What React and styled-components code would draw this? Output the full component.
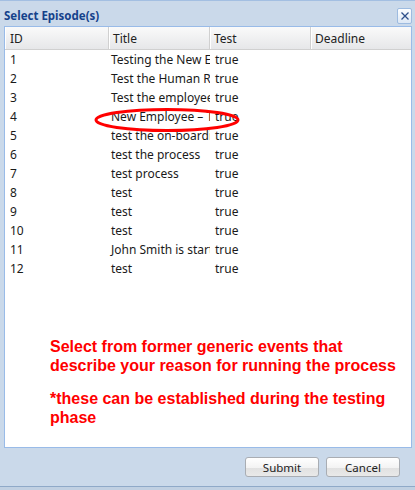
import React from "react";
import styled, { createGlobalStyle } from "styled-components";

const Global = createGlobalStyle`
  html, body { margin: 0; padding: 0; background: #cad9ea; }
  #root { width: 415px; height: 490px; }
`;

const Window = styled.div`
  position: relative;
  width: 415px;
  height: 490px;
  box-sizing: border-box;
  background: #cad9ea;
  border-top: 1px solid #a3bfe2;
  display: flex;
  flex-direction: column;
  font-family: "Noto Sans", "DejaVu Sans", sans-serif;
  overflow: hidden;
`;

const TitleBar = styled.div`
  height: 25px;
  display: flex;
  align-items: center;
  justify-content: space-between;
  padding: 0 3px 0 4px;
  box-sizing: border-box;
`;

const Title = styled.span`
  font-family: "Noto Sans", "DejaVu Sans", sans-serif;
  font-weight: bold;
  font-size: 11.5px;
  color: #15428b;
  margin-top: 3px;
`;

const CloseBtn = styled.div`
  width: 13px;
  height: 14px;
  border: 1px solid #9dbbe0;
  border-radius: 2px;
  background: linear-gradient(#fdfeff, #dde8f5);
  display: flex;
  align-items: center;
  justify-content: center;
  margin-top: 4px;
`;

const Grid = styled.div`
  position: relative;
  margin: 0 3px 0 4px;
  height: 422px;
  background: #fff;
  border: 1px solid #99bbe8;
  box-sizing: border-box;
  overflow: hidden;
`;

const cols = "104px 101px 101px 1fr";

const HeaderRow = styled.div`
  display: grid;
  grid-template-columns: ${cols};
  height: 22px;
  background: linear-gradient(#fafafa, #e6e7e9);
  border-bottom: 1px solid #d0d0d0;
`;

const HeadCell = styled.div`
  display: flex;
  align-items: center;
  padding-left: ${(p) => p.$pad || 4}px;
  font-size: 12px;
  color: #222;
  border-right: 1px solid #d0d0d0;
  box-shadow: inset 1px 0 0 #fff;
  &:last-child { border-right: none; }
`;

const Row = styled.div`
  display: grid;
  grid-template-columns: ${cols};
  height: 19px;
  align-items: center;
`;

const Cell = styled.div`
  padding-left: ${(p) => p.$pad || 5}px;
  font-size: 12px;
  color: #1a1a1a;
  white-space: nowrap;
  overflow: hidden;
`;

const Note = styled.div`
  position: absolute;
  left: 45px;
  top: 311px;
  width: 352px;
  font-family: "Liberation Sans", Arial, sans-serif;
  font-weight: bold;
  font-size: 16px;
  line-height: 18.5px;
  color: #ff0000;
`;

const NoteGap = styled.div`
  height: 15px;
`;

const Ellipse = styled.svg`
  position: absolute;
  left: 87px;
  top: 80px;
`;

const Footer = styled.div`
  height: 37px;
  display: flex;
  align-items: center;
  justify-content: flex-end;
  gap: 7px;
  padding-right: 15px;
  padding-top: 1px;
  box-sizing: border-box;
`;

const Button = styled.button`
  width: 74px;
  height: 20px;
  padding: 0;
  border: 1px solid #a9adb3;
  border-radius: 3px;
  background: linear-gradient(#ffffff 0%, #f3f3f3 55%, #e1e1e1 56%, #e9e9e9 100%);
  font-family: "Noto Sans", "DejaVu Sans", sans-serif;
  font-size: 11.5px;
  color: #222;
`;

const BottomEdge = styled.div`
  height: 3px;
  border-top: 1px solid #8fa9c8;
  background: #c0d0e2;
  margin-top: auto;
`;

const rows = [
  ["1", "Testing the New Employee", "true"],
  ["2", "Test the Human Resources", "true"],
  ["3", "Test the employee process", "true"],
  ["4", "New Employee – Test", "true"],
  ["5", "test the on-boarding", "true"],
  ["6", "test the process", "true"],
  ["7", "test process", "true"],
  ["8", "test", "true"],
  ["9", "test", "true"],
  ["10", "test", "true"],
  ["11", "John Smith is starting", "true"],
  ["12", "test", "true"],
];

export default function App() {
  return (
    <>
      <Global />
      <Window>
        <TitleBar>
          <Title>Select Episode(s)</Title>
          <CloseBtn>
            <svg width="10" height="10" viewBox="0 0 10 10">
              <path d="M1.5 1.5 L8.5 8.5 M8.5 1.5 L1.5 8.5" stroke="#2d4f8a" strokeWidth="1.3" />
            </svg>
          </CloseBtn>
        </TitleBar>
        <Grid>
          <HeaderRow>
            <HeadCell $pad={5}>ID</HeadCell>
            <HeadCell>Title</HeadCell>
            <HeadCell>Test</HeadCell>
            <HeadCell>Deadline</HeadCell>
          </HeaderRow>
          {rows.map((r) => (
            <Row key={r[0]}>
              <Cell $pad={5}>{r[0]}</Cell>
              <Cell $pad={2}>{r[1]}</Cell>
              <Cell $pad={0}>{r[2]}</Cell>
              <Cell />
            </Row>
          ))}
          <Ellipse width="150" height="26" viewBox="0 0 150 26">
            <ellipse cx="75" cy="13" rx="71" ry="10.5" fill="none" stroke="#ff0000" strokeWidth="3" />
          </Ellipse>
          <Note>
            Select from former generic events that describe your reason for running the process
            <NoteGap />
            *these can be established during the testing phase
          </Note>
        </Grid>
        <Footer>
          <Button>Submit</Button>
          <Button>Cancel</Button>
        </Footer>
        <BottomEdge />
      </Window>
    </>
  );
}
